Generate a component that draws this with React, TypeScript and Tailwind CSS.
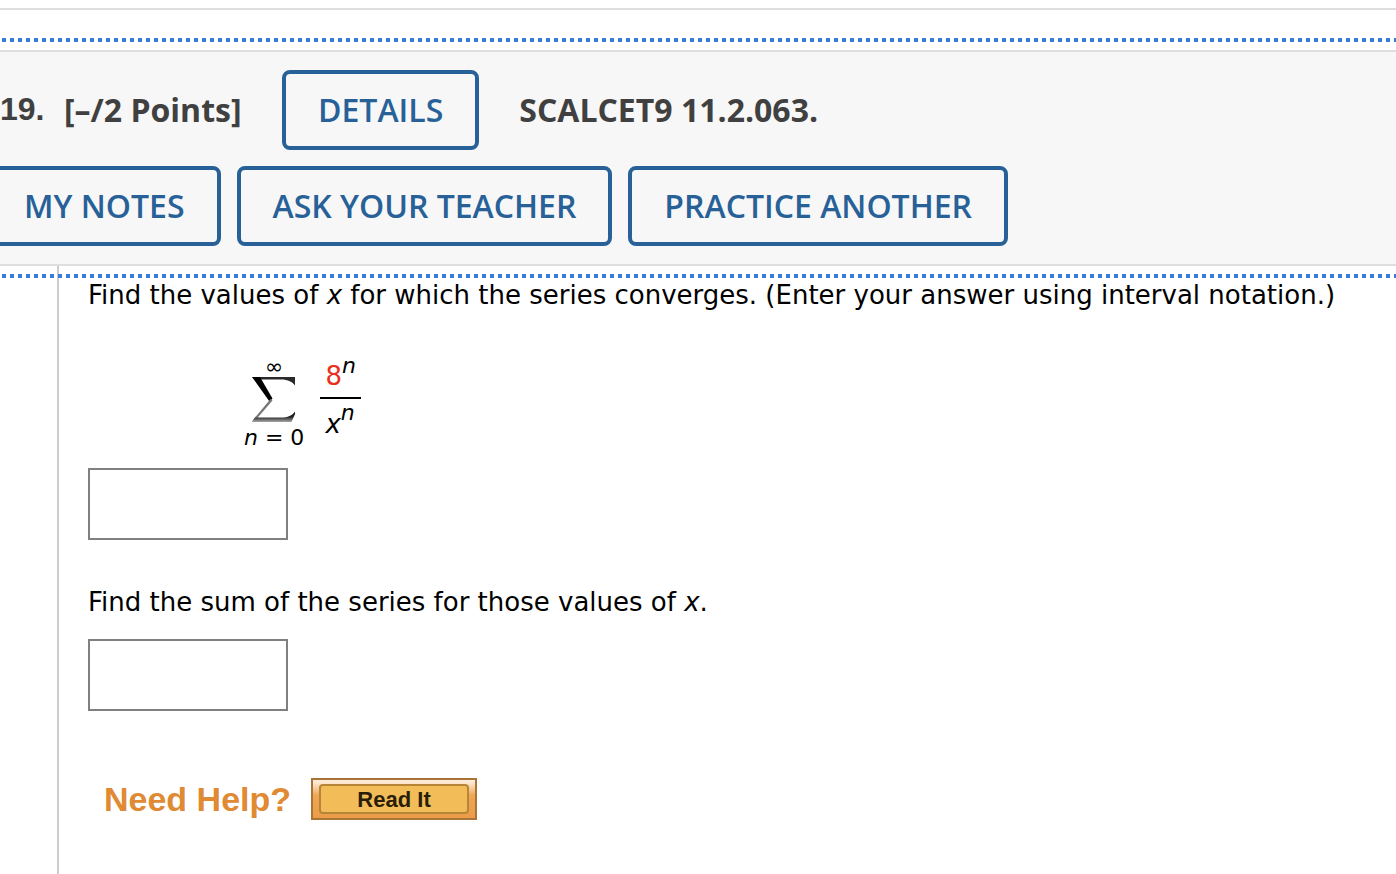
const buttonClass =
  "flex h-20 shrink-0 items-center rounded-lg border-4 border-[#276197] px-8 text-[32px] leading-none font-semibold whitespace-nowrap text-[#276197]";

const dottedLine =
  "h-1 bg-[repeating-linear-gradient(to_right,transparent_0px,transparent_2px,#367ddc_2px,#367ddc_6px,transparent_6px,transparent_8px)]";

const answerClass = "block h-[72px] w-[200px] border-2 border-[#808080] bg-white px-3";

function Series() {
  return (
    <div className="ml-[156px] flex items-start gap-4 text-[22px] leading-6">
      <div className="flex flex-col items-center">
        <span className="leading-[21px]">∞</span>
        <svg viewBox="0 0 44 46" className="h-[46px] w-11" aria-hidden="true">
          <defs>
            <linearGradient id="foot" x1="0" y1="0" x2="0" y2="1">
              <stop offset="0" stopColor="#111" />
              <stop offset="0.5" stopColor="#222" />
              <stop offset="1" stopColor="#aaa" />
            </linearGradient>
          </defs>
          <path d="M0 0H43V8.500C40.500 5 36 2.600 29 2.600H8L5 3Z" fill="#2a2a2a" />
          <path d="M0 0H8L20.500 21.500L17.500 24.500Z" fill="#000" />
          <path d="M18.500 22L20.500 23.500L4.500 42L1 43Z" fill="#777" />
          <path d="M0 44.500L3 40.500H29C36 40.500 40 38.500 43 34.500V37L39.500 45H0Z" fill="url(#foot)" />
        </svg>
        <span className="mt-[3px]">
          <i>n</i> = 0
        </span>
      </div>
      <div className="flex flex-col text-[26px]">
        <div className="flex h-[43px] border-b-2 border-black px-[5px] pt-0.5 leading-9">
          <span className="text-[#e8301c]">8</span>
          <i className="text-[22px] leading-4">n</i>
        </div>
        <div className="flex h-10 px-[5px] pt-1">
          <i className="leading-[42px]">x</i>
          <i className="text-[22px] leading-5">n</i>
        </div>
      </div>
    </div>
  );
}

export default function App() {
  return (
    <div className="flex min-h-screen flex-col overflow-x-hidden bg-white">
      <div className="mt-2 h-0.5 bg-[#dedede]" />
      <div className={`mt-7 ${dottedLine}`} />
      <header className="mt-2 border-y-2 border-[#dedede] bg-[#f7f7f7] py-[18px] font-['Open_Sans',sans-serif]">
        <div className="flex h-20 items-center text-[32px] font-bold whitespace-nowrap text-[#404040]">
          <span className="w-16 shrink-0 pb-0.5 font-['Liberation_Sans',sans-serif]">19.</span>
          <span className="w-[218px] shrink-0">[–/2 Points]</span>
          <button type="button" className={buttonClass}>DETAILS</button>
          <h1 className="ml-10">SCALCET9 11.2.063.</h1>
        </div>
        <div className="mt-4 -ml-3 flex gap-4">
          <button type="button" className={buttonClass}>MY NOTES</button>
          <button type="button" className={buttonClass}>ASK YOUR TEACHER</button>
          <button type="button" className={buttonClass}>PRACTICE ANOTHER</button>
        </div>
      </header>
      <div className="relative flex grow flex-col">
        <div className={`absolute inset-x-0 top-2 ${dottedLine}`} />
        <main className="ml-[57px] grow border-l-2 border-[#cccccc] pt-[9px] pl-[29px] font-['DejaVu_Sans',sans-serif] text-[26px] leading-10 text-black">
          <label htmlFor="interval" className="block whitespace-nowrap">
            Find the values of <i>x</i> for which the series converges. (Enter your answer using interval notation.)
          </label>
          <div className="mt-[41px] mb-[18px]">
            <Series />
          </div>
          <input id="interval" type="text" className={answerClass} />
          <label htmlFor="sum" className="mt-[42px] mb-[17px] block">
            Find the sum of the series for those values of <i>x</i>.
          </label>
          <input id="sum" type="text" className={answerClass} />
          <div className="mt-[67px] ml-4 flex items-center gap-5 font-['Liberation_Sans',sans-serif] font-bold">
            <span className="text-[34px] text-[#e08a34]">Need Help?</span>
            <button
              type="button"
              className="h-[42px] w-[166px] border-2 border-[#a87539] bg-linear-to-b from-[#fdebd8] from-5% via-[#efa653] via-40% to-[#ec9c48] px-1.5 py-1"
            >
              <span className="flex h-[30px] items-center justify-center rounded-sm border-2 border-[#b78537] bg-[#f2bd59] pt-0.5 text-[22px] leading-none text-[#2a1e08]">
                Read It
              </span>
            </button>
          </div>
        </main>
      </div>
    </div>
  );
}
